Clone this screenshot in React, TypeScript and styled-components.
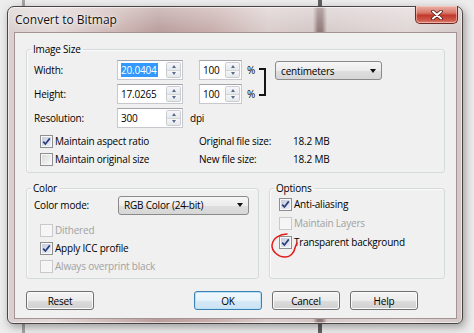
import React from 'react';
import styled, { createGlobalStyle, css } from 'styled-components';

const GlobalStyle = createGlobalStyle`
  html, body { margin: 0; padding: 0; }
  body {
    font-family: "Open Sans", "Noto Sans", sans-serif;
    font-size: 10px;
    letter-spacing: -0.2px;
    color: #000;
  }
  * { box-sizing: border-box; }
`;

const Desktop = styled.div`
  width: 474px;
  height: 333px;
  overflow: hidden;
  padding: 6px 11px 9px 7px;
  background:
    linear-gradient(90deg, transparent 22px, #a3a3a3 22px, #a3a3a3 25px, transparent 25px,
      transparent 318px, #5f5f5f 318px, #5f5f5f 322px, transparent 322px),
    #ececec;
`;

const Window = styled.div`
  width: 456px;
  height: 318px;
  display: flex;
  flex-direction: column;
  border: 1px solid #4a4444;
  border-radius: 7px 7px 6px 6px;
  box-shadow: 2px 3px 8px rgba(0, 0, 0, 0.35), inset 0 0 0 1px rgba(255, 255, 255, 0.55);
  background:
    linear-gradient(180deg, rgba(255, 255, 255, 0.35), rgba(255, 255, 255, 0) 26px),
    linear-gradient(90deg, #d8cfce 0px, #e2d8d7 45px, #ccb5b3 110px, #b89d9b 150px, #c7adab 205px,
      #dacdcc 260px, #d4c7c6 305px, #8e7876 310px, #8e7876 314px, #d6cbca 319px,
      #dfd6d5 400px, #d3c8c7 456px);
`;

const TitleBar = styled.div`
  height: 25px;
  flex: none;
  display: flex;
  align-items: flex-start;
  justify-content: space-between;
  padding-left: 7px;
`;

const Title = styled.span`
  font-size: 12px;
  letter-spacing: 0;
  line-height: 14px;
  padding-top: 6px;
  color: #111;
  text-shadow: 0 0 6px rgba(255, 255, 255, 0.9), 0 0 2px rgba(255, 255, 255, 0.9);
`;

const CloseButton = styled.div`
  width: 43px;
  height: 18px;
  margin: -1px 4px 0 0;
  display: flex;
  align-items: center;
  justify-content: center;
  border: 1px solid #6b2a26;
  border-top: none;
  border-radius: 0 0 5px 5px;
  background: linear-gradient(180deg, #eab2a6 0%, #d9786a 40%, #c3392c 55%, #cf5b4c 85%, #e08a7c 100%);
  box-shadow: inset 0 0 0 1px rgba(255, 220, 210, 0.5);
`;

const Client = styled.div`
  flex: 1;
  margin: 0 5px 5px 6px;
  border: 1px solid #a39493;
  background: #f0f0f0;
  padding: 10px 11px 8px 11px;
  display: flex;
  flex-direction: column;
`;

const Group = styled.fieldset<{ $w?: number }>`
  margin: 0;
  padding: 0;
  min-width: 0;
  border: 1px solid #d5dadd;
  border-radius: 3px;
  box-shadow: inset 1px 1px 0 #fbfbfb;
  ${(p) => p.$w && css`width: ${p.$w}px; flex: none;`}
`;

const Caption = styled.legend`
  margin-left: 4px;
  padding: 0 2px;
  line-height: 12px;
`;

const GroupBody = styled.div<{ $pad: string }>`
  padding: ${(p) => p.$pad};
  display: flex;
  flex-direction: column;
`;

const Row = styled.div<{ $gap?: number }>`
  display: flex;
  align-items: center;
  height: 20px;
  margin-top: ${(p) => p.$gap ?? 0}px;
`;

const Label = styled.span<{ $w: number }>`
  width: ${(p) => p.$w}px;
  flex: none;
`;

const SpinBox = styled.div<{ $w: number; $ml?: number }>`
  width: ${(p) => p.$w}px;
  height: 20px;
  flex: none;
  margin-left: ${(p) => p.$ml ?? 0}px;
  display: flex;
  align-items: center;
  padding: 1px 1px 1px 3px;
  background: #fff;
  border: 1px solid #c6c8cd;
  border-top-color: #a2a4a9;
`;

const SpinValue = styled.span`
  flex: 1;
  line-height: 12px;
`;

const Selected = styled.span`
  background: #3399ff;
  color: #fff;
  padding-right: 1px;
`;

const Spinner = styled.div`
  width: 15px;
  height: 100%;
  flex: none;
  display: flex;
  flex-direction: column;
  border: 1px solid #c9ccd2;
  border-radius: 2px;
  overflow: hidden;
`;

const SpinHalf = styled.div<{ $down?: boolean }>`
  flex: 1;
  display: flex;
  align-items: center;
  justify-content: center;
  background: linear-gradient(180deg, #f7f7f8, #e6e7ea);
  ${(p) => p.$down && css`border-top: 1px solid #d4d6da;`}
  &::after {
    content: '';
    border-left: 2.5px solid transparent;
    border-right: 2.5px solid transparent;
    ${(p) => (p.$down ? css`border-top: 3px solid #56698e;` : css`border-bottom: 3px solid #56698e;`)}
  }
`;

const Unit = styled.span<{ $ml: number }>`
  margin-left: ${(p) => p.$ml}px;
  flex: none;
`;

const SizeTop = styled.div`
  display: flex;
  align-items: flex-start;
`;

const SizeRows = styled.div`
  display: flex;
  flex-direction: column;
  gap: 4px;
`;

const Bracket = styled.div`
  width: 7px;
  height: 28px;
  margin: 8px 0 0 4px;
  border: 2px solid #151515;
  border-left: none;
  flex: none;
`;

const Combo = styled.div<{ $w: number; $h: number; $ml?: number; $mt?: number }>`
  width: ${(p) => p.$w}px;
  height: ${(p) => p.$h}px;
  margin-left: ${(p) => p.$ml ?? 0}px;
  margin-top: ${(p) => p.$mt ?? 0}px;
  flex: none;
  display: flex;
  align-items: center;
  justify-content: space-between;
  padding: 0 5px 0 5px;
  border: 1px solid #8a8a8a;
  border-radius: 3px;
  background: linear-gradient(180deg, #f6f6f6 0%, #ececec 50%, #dfdfdf 51%, #d6d6d6 100%);
  &::after {
    content: '';
    border-left: 3.5px solid transparent;
    border-right: 3.5px solid transparent;
    border-top: 4px solid #111;
  }
`;

const InfoGrid = styled.div`
  display: grid;
  grid-template-columns: 159px 94px 1fr;
  grid-auto-rows: 18px;
  align-items: center;
  margin-top: 4px;
  padding-left: 6px;
`;

const Lower = styled.div`
  display: flex;
  gap: 10px;
  margin-top: 9px;
`;

const CheckList = styled.div<{ $gap: number; $mt: number; $indent?: number }>`
  display: flex;
  flex-direction: column;
  gap: ${(p) => p.$gap}px;
  margin-top: ${(p) => p.$mt}px;
  padding-left: ${(p) => p.$indent ?? 0}px;
`;

const CheckItem = styled.label<{ $disabled?: boolean }>`
  position: relative;
  display: flex;
  align-items: center;
  gap: 2px;
  height: 18px;
  color: ${(p) => (p.$disabled ? '#a2a2a2' : '#000')};
`;

const Box = styled.span<{ $checked?: boolean; $disabled?: boolean }>`
  width: 13px;
  height: 13px;
  flex: none;
  display: flex;
  align-items: center;
  justify-content: center;
  border: 1px solid ${(p) => (p.$disabled ? '#c9c9c9' : '#8e8f8f')};
  background: ${(p) =>
    p.$disabled
      ? '#f5f5f5'
      : p.$checked
      ? 'linear-gradient(135deg, #c3c9dc 0%, #e4e8f2 75%, #f4f6fa 100%)'
      : 'linear-gradient(135deg, #d7d7d7 0%, #f1f1f1 75%, #fbfbfb 100%)'};
  box-shadow: inset 0 0 0 1px #f7f7f7;
`;

const Annotation = styled.svg`
  position: absolute;
  left: -9px;
  top: -1px;
  overflow: visible;
  pointer-events: none;
`;

const ButtonRow = styled.div`
  display: flex;
  justify-content: space-between;
  margin-top: 12px;
  padding-right: 27px;
`;

const ButtonGroup = styled.div`
  display: flex;
  gap: 10px;
`;

const Button = styled.button<{ $default?: boolean }>`
  width: 68px;
  height: 19px;
  padding: 0;
  font: inherit;
  letter-spacing: inherit;
  color: #000;
  border: 1px solid #707070;
  border-radius: 3px;
  background: linear-gradient(180deg, #f4f4f4 0%, #ebebeb 50%, #dddddd 51%, #cfcfcf 100%);
  box-shadow: inset 0 0 0 1px #fbfbfb;
  ${(p) =>
    p.$default &&
    css`
      border-color: #3c7fb1;
      background: linear-gradient(180deg, #f0f8fd 0%, #e6f2fa 50%, #d6e9f6 51%, #cbe3f3 100%);
      box-shadow: inset 0 0 0 1px #b9e1f8;
    `}
`;

type CheckProps = { label: string; checked?: boolean; disabled?: boolean; children?: React.ReactNode };

const Check = ({ label, checked, disabled, children }: CheckProps) => (
  <CheckItem $disabled={disabled}>
    <Box $checked={checked} $disabled={disabled}>
      {checked && (
        <svg width="9" height="9" viewBox="0 0 9 9">
          <path d="M1.2 4.6 L3.4 7 L7.8 1.4" fill="none" stroke="#2c3f7a" strokeWidth="1.7" />
        </svg>
      )}
    </Box>
    {label}
    {children}
  </CheckItem>
);

const Spin = ({ w, value, selected, ml }: { w: number; value: string; selected?: boolean; ml?: number }) => (
  <SpinBox $w={w} $ml={ml}>
    <SpinValue>{selected ? <Selected>{value}</Selected> : value}</SpinValue>
    <Spinner>
      <SpinHalf />
      <SpinHalf $down />
    </Spinner>
  </SpinBox>
);

export default function App() {
  return (
    <Desktop>
      <GlobalStyle />
      <Window>
        <TitleBar>
          <Title>Convert to Bitmap</Title>
          <CloseButton>
            <svg width="12" height="10" viewBox="0 0 12 10">
              <path d="M2 1.5 L10 8.5 M10 1.5 L2 8.5" stroke="#4b1713" strokeWidth="3.6" strokeLinecap="round" />
              <path d="M2 1.5 L10 8.5 M10 1.5 L2 8.5" stroke="#fff" strokeWidth="2" strokeLinecap="round" />
            </svg>
          </CloseButton>
        </TitleBar>
        <Client>
          <Group>
            <Caption>Image Size</Caption>
            <GroupBody $pad="5px 0 4px 7px">
              <SizeTop>
                <SizeRows>
                  <Row>
                    <Label $w={83}>Width:</Label>
                    <Spin w={66} value="20.0404" selected />
                    <Spin w={43} value="100" ml={16} />
                    <Unit $ml={5}>%</Unit>
                  </Row>
                  <Row>
                    <Label $w={83}>Height:</Label>
                    <Spin w={66} value="17.0265" />
                    <Spin w={43} value="100" ml={16} />
                    <Unit $ml={5}>%</Unit>
                  </Row>
                </SizeRows>
                <Bracket />
                <Combo $w={107} $h={19} $ml={9} $mt={1}>centimeters</Combo>
              </SizeTop>
              <Row $gap={4}>
                <Label $w={83}>Resolution:</Label>
                <Spin w={66} value="300" />
                <Unit $ml={7}>dpi</Unit>
              </Row>
              <InfoGrid>
                <Check label="Maintain aspect ratio" checked />
                <span>Original file size:</span>
                <span>18.2 MB</span>
                <Check label="Maintain original size" />
                <span>New file size:</span>
                <span>18.2 MB</span>
              </InfoGrid>
            </GroupBody>
          </Group>
          <Lower>
            <Group $w={233}>
              <Caption>Color</Caption>
              <GroupBody $pad="1px 0 3px 7px">
                <Row>
                  <Label $w={84}>Color mode:</Label>
                  <Combo $w={131} $h={19}>RGB Color (24-bit)</Combo>
                </Row>
                <CheckList $gap={0} $mt={6} $indent={6}>
                  <Check label="Dithered" disabled />
                  <Check label="Apply ICC profile" checked />
                  <Check label="Always overprint black" disabled />
                </CheckList>
              </GroupBody>
            </Group>
            <Group $w={176}>
              <Caption>Options</Caption>
              <GroupBody $pad="1px 0 3px 9px">
                <CheckList $gap={1} $mt={0}>
                  <Check label="Anti-aliasing" checked />
                  <Check label="Maintain Layers" disabled />
                  <Check label="Transparent background" checked>
                    <Annotation width="29" height="27" viewBox="0 0 29 27">
                      <path
                        d="M17 2 C10 2, 3 6, 2 13 C1.5 19, 8 25, 15 25 C20 25.5, 24 21, 25 16 C25.5 14, 26.5 12, 27 11"
                        fill="none"
                        stroke="#e21d1a"
                        strokeWidth="1.5"
                        strokeLinecap="round"
                      />
                    </Annotation>
                  </Check>
                </CheckList>
              </GroupBody>
            </Group>
          </Lower>
          <ButtonRow>
            <Button>Reset</Button>
            <ButtonGroup>
              <Button $default>OK</Button>
              <Button>Cancel</Button>
              <Button>Help</Button>
            </ButtonGroup>
          </ButtonRow>
        </Client>
      </Window>
    </Desktop>
  );
}
